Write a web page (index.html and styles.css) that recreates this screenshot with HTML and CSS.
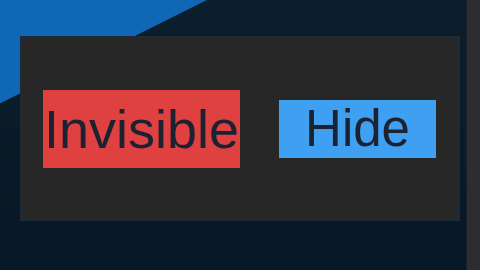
FILE: index.html
```html
<!DOCTYPE html>
<html lang="en">
	<head>
		<meta charset="UTF-8" />
		<meta name="viewport" content="width=device-width, initial-scale=1.0" />
		<title>Visibility</title>
		<link rel="stylesheet" href="styles.css">
	</head>
	<body>
		<div class="desktop">
			<div class="panel">
				<div class="label label-invisible">Invisible</div>
				<div class="label label-hide">Hide</div>
			</div>
		</div>
		<div class="side-edge"></div>
	</body>
</html>
```

FILE: styles.css
```css
* {
	padding: 0;
	margin: 0;
	box-sizing: border-box;
}
html,
body {
	height: 100%;
}
body {
	display: flex;
	font-family: "Liberation Sans", Arial, sans-serif;
	background:
		linear-gradient(153.43deg, #0f67b5 92px, transparent 93px),
		linear-gradient(180deg, #0c1e2b 0%, #081725 100%);
	overflow: hidden;
}
.desktop {
	flex: 1;
	padding: 36px 6px 0 20px;
}
.panel {
	width: 440px;
	height: 185px;
	display: flex;
	align-items: center;
	column-gap: 39px;
	padding-left: 21px;
	background-color: #272727;
	border: 2px solid #1d2a39;
}
.label {
	color: #1b2232;
	white-space: nowrap;
}
.label-invisible {
	font-size: 54px;
	background-color: #df4040;
	line-height: 78px;
	padding: 0 1px;
}
.label-hide {
	font-size: 51px;
	background-color: #3f9ff0;
	line-height: 58px;
	padding: 0 26px;
}
.side-edge {
	width: 14px;
	background-color: #2b2d31;
	border-left: 1px solid #1d2228;
}
```
